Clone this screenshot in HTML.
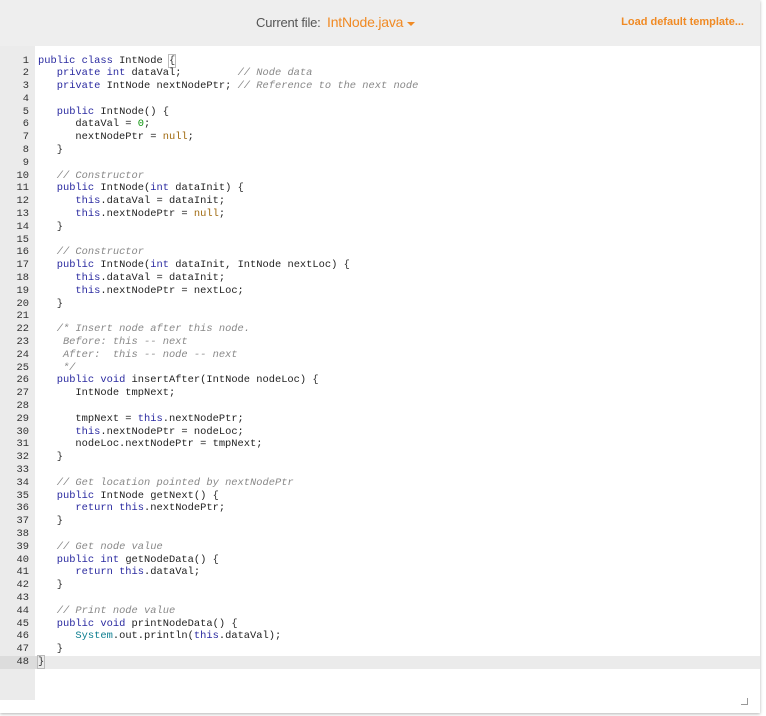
<!DOCTYPE html>
<html><head><meta charset="utf-8"><style>
body{margin:0;background:#fff;width:766px;height:716px;overflow:hidden;font-family:"Liberation Sans",sans-serif}
.wrap{position:absolute;left:0;top:0;width:760px;height:713px;box-shadow:0 1px 3px rgba(0,0,0,.3);background:#fff}
.hdr{height:46px;background:#eeeeee;position:relative}
.cf{position:absolute;left:256px;top:14px;font-size:13px;color:#555;letter-spacing:-0.2px}
.cf b{font-weight:normal;color:#f08a24;font-size:14px;margin-left:3px}
.caret{display:inline-block;border-left:4px solid transparent;border-right:4px solid transparent;border-top:4px solid #f08a24;vertical-align:middle;margin-left:4px}
.ld{position:absolute;right:16px;top:16px;font-size:11px;font-weight:bold;color:#f08a24}
.gut{position:absolute;left:0;top:46px;width:35px;height:654px;background:#ebebeb}
.code{position:absolute;left:0;top:54.5px;width:760px;font-family:"Liberation Mono",monospace;font-size:10.4px;line-height:12.8px;color:#222}
.l{height:12.8px;white-space:pre;position:relative}
.n{display:inline-block;width:29px;text-align:right;color:#333;margin-right:9px}
.hl{background:#ebebeb}
.k{color:#2a2aa0}.c{color:#888;font-style:italic}.nu{color:#a06a10}.d{color:#099409}.s{color:#0b7d8f}.p{color:#333}
.rs{position:absolute;right:12px;bottom:8px;width:6px;height:6px;border-right:1px solid #999;border-bottom:1px solid #999}
</style></head><body><div class="wrap">
<div class="hdr"><div class="cf">Current file: <b>IntNode.java</b><span class="caret"></span></div><div class="ld">Load default template...</div></div>
<div class="gut"></div>
<div class="code">
<div class="l"><span class="n">1</span><span class="k">public class</span> IntNode <span class="p" style="outline:1px solid #bbb">{</span></div>
<div class="l"><span class="n">2</span>   <span class="k">private int</span> dataVal;         <span class="c">// Node data</span></div>
<div class="l"><span class="n">3</span>   <span class="k">private</span> IntNode nextNodePtr; <span class="c">// Reference to the next node</span></div>
<div class="l"><span class="n">4</span></div>
<div class="l"><span class="n">5</span>   <span class="k">public</span> IntNode() <span class="p">{</span></div>
<div class="l"><span class="n">6</span>      dataVal = <span class="d">0</span>;</div>
<div class="l"><span class="n">7</span>      nextNodePtr = <span class="nu">null</span>;</div>
<div class="l"><span class="n">8</span>   <span class="p">}</span></div>
<div class="l"><span class="n">9</span></div>
<div class="l"><span class="n">10</span>   <span class="c">// Constructor</span></div>
<div class="l"><span class="n">11</span>   <span class="k">public</span> IntNode(<span class="k">int</span> dataInit) <span class="p">{</span></div>
<div class="l"><span class="n">12</span>      <span class="k">this</span>.dataVal = dataInit;</div>
<div class="l"><span class="n">13</span>      <span class="k">this</span>.nextNodePtr = <span class="nu">null</span>;</div>
<div class="l"><span class="n">14</span>   <span class="p">}</span></div>
<div class="l"><span class="n">15</span></div>
<div class="l"><span class="n">16</span>   <span class="c">// Constructor</span></div>
<div class="l"><span class="n">17</span>   <span class="k">public</span> IntNode(<span class="k">int</span> dataInit, IntNode nextLoc) <span class="p">{</span></div>
<div class="l"><span class="n">18</span>      <span class="k">this</span>.dataVal = dataInit;</div>
<div class="l"><span class="n">19</span>      <span class="k">this</span>.nextNodePtr = nextLoc;</div>
<div class="l"><span class="n">20</span>   <span class="p">}</span></div>
<div class="l"><span class="n">21</span></div>
<div class="l"><span class="n">22</span>   <span class="c">/* Insert node after this node.</span></div>
<div class="l"><span class="n">23</span><span class="c">    Before: this -- next</span></div>
<div class="l"><span class="n">24</span><span class="c">    After:  this -- node -- next</span></div>
<div class="l"><span class="n">25</span><span class="c">    */</span></div>
<div class="l"><span class="n">26</span>   <span class="k">public void</span> insertAfter(IntNode nodeLoc) <span class="p">{</span></div>
<div class="l"><span class="n">27</span>      IntNode tmpNext;</div>
<div class="l"><span class="n">28</span></div>
<div class="l"><span class="n">29</span>      tmpNext = <span class="k">this</span>.nextNodePtr;</div>
<div class="l"><span class="n">30</span>      <span class="k">this</span>.nextNodePtr = nodeLoc;</div>
<div class="l"><span class="n">31</span>      nodeLoc.nextNodePtr = tmpNext;</div>
<div class="l"><span class="n">32</span>   <span class="p">}</span></div>
<div class="l"><span class="n">33</span></div>
<div class="l"><span class="n">34</span>   <span class="c">// Get location pointed by nextNodePtr</span></div>
<div class="l"><span class="n">35</span>   <span class="k">public</span> IntNode getNext() <span class="p">{</span></div>
<div class="l"><span class="n">36</span>      <span class="k">return this</span>.nextNodePtr;</div>
<div class="l"><span class="n">37</span>   <span class="p">}</span></div>
<div class="l"><span class="n">38</span></div>
<div class="l"><span class="n">39</span>   <span class="c">// Get node value</span></div>
<div class="l"><span class="n">40</span>   <span class="k">public int</span> getNodeData() <span class="p">{</span></div>
<div class="l"><span class="n">41</span>      <span class="k">return this</span>.dataVal;</div>
<div class="l"><span class="n">42</span>   <span class="p">}</span></div>
<div class="l"><span class="n">43</span></div>
<div class="l"><span class="n">44</span>   <span class="c">// Print node value</span></div>
<div class="l"><span class="n">45</span>   <span class="k">public void</span> printNodeData() <span class="p">{</span></div>
<div class="l"><span class="n">46</span>      <span class="s">System</span>.out.println(<span class="k">this</span>.dataVal);</div>
<div class="l"><span class="n">47</span>   <span class="p">}</span></div>
<div class="l hl"><span class="n" style="background:#dcdcdc;margin-right:0;padding-right:9px">48</span><span class="p" style="outline:1px solid #bbb">}</span></div>
</div>
<div class="rs"></div>
</div></body></html>
